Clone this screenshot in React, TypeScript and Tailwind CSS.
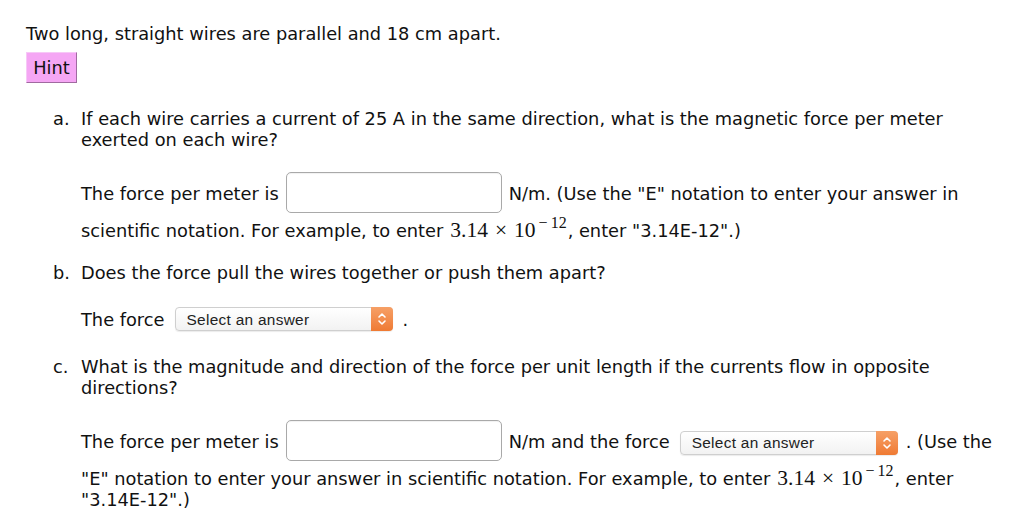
const Math = () => (
  <span className="font-['Liberation_Serif','DejaVu_Serif',serif] text-[21.5px] ml-[7px] mr-[1px] whitespace-nowrap">
    3.14<span className="mx-[7px]">×</span>10
    <sup className="text-[16px] relative top-[-9px] ml-[3px]">
      −<span className="ml-[3px]">12</span>
    </sup>
  </span>
);

const Select = () => (
  <div className="relative inline-flex h-[24px] w-[218px] items-center rounded-[4px] border border-[#cfcfcf] bg-gradient-to-b from-white to-[#f2f2f2] font-['Liberation_Sans',Arial,sans-serif] text-[15.4px] tracking-[0.3px] text-[#222] shadow-[0_1px_1px_rgba(0,0,0,0.08)]">
    <span className="pl-[11px]">Select an answer</span>
    <span className="absolute right-[-1px] top-[-1px] flex h-[24px] w-[22px] items-center justify-center rounded-r-[4px] bg-gradient-to-b from-[#f6a066] to-[#ef7a32]">
      <svg width="10" height="16" viewBox="0 0 10 16" fill="none" stroke="white" strokeWidth="1.6" strokeLinecap="round" strokeLinejoin="round">
        <path d="M2 6 L5 3 L8 6" />
        <path d="M2 10 L5 13 L8 10" />
      </svg>
    </span>
  </div>
);

const Input = () => (
  <span className="inline-block h-[41px] w-[216px] rounded-[5px] border border-[#a9a9a9] bg-white shadow-[inset_0_1px_1px_rgba(0,0,0,0.06)]" />
);

export default function App() {
  return (
    <div className="min-h-[524px] bg-white pl-[26px] pt-[23px] font-['DejaVu_Sans',Verdana,sans-serif] text-[17.8px] leading-[21px] text-[#111]">
      <p>Two long, straight wires are parallel and 18 cm apart.</p>
      <button className="mt-[8px] h-[31px] w-[51px] border border-b-[#a06aa0] border-l-[#f7c8f7] border-r-[#a06aa0] border-t-[#f7c8f7] bg-[#f5a6f4] pb-[1px] text-[17.8px] text-[#111]">
        Hint
      </button>

      {/* a */}
      <div className="mt-[25px] flex">
        <span className="ml-[27px] w-[28px] shrink-0">a.</span>
        <div>
          <p>If each wire carries a current of 25 A in the same direction, what is the magnetic force per meter</p>
          <p>exerted on each wire?</p>
          <div className="mt-[24px] flex h-[41px] items-center">
            <span className="-mt-[3px]">The force per meter is</span>
            <span className="ml-[7px]"><Input /></span>
            <span className="ml-[7px] -mt-[3px]">N/m. (Use the "E" notation to enter your answer in</span>
          </div>
          <p className="mt-[5px]">
            scientific notation. For example, to enter<Math />, enter "3.14E-12".)
          </p>
        </div>
      </div>

      {/* b */}
      <div className="mt-[21px] flex">
        <span className="ml-[27px] w-[28px] shrink-0">b.</span>
        <div>
          <p>Does the force pull the wires together or push them apart?</p>
          <div className="mt-[24px] flex h-[24px] items-center">
            <span>The force</span>
            <span className="ml-[10px]"><Select /></span>
            <span className="ml-[10px]">.</span>
          </div>
        </div>
      </div>

      {/* c */}
      <div className="mt-[25px] flex">
        <span className="ml-[27px] w-[28px] shrink-0">c.</span>
        <div>
          <p>What is the magnitude and direction of the force per unit length if the currents flow in opposite</p>
          <p>directions?</p>
          <div className="mt-[24px] flex h-[41px] items-center">
            <span className="-mt-[3px]">The force per meter is</span>
            <span className="ml-[7px]"><Input /></span>
            <span className="ml-[7px] -mt-[3px]">N/m and the force</span>
            <span className="ml-[10px]"><Select /></span>
            <span className="ml-[8px] -mt-[3px]">. (Use the</span>
          </div>
          <p className="mt-[5px]">
            "E" notation to enter your answer in scientific notation. For example, to enter<Math />, enter
          </p>
          <p>"3.14E-12".)</p>
        </div>
      </div>
    </div>
  );
}
